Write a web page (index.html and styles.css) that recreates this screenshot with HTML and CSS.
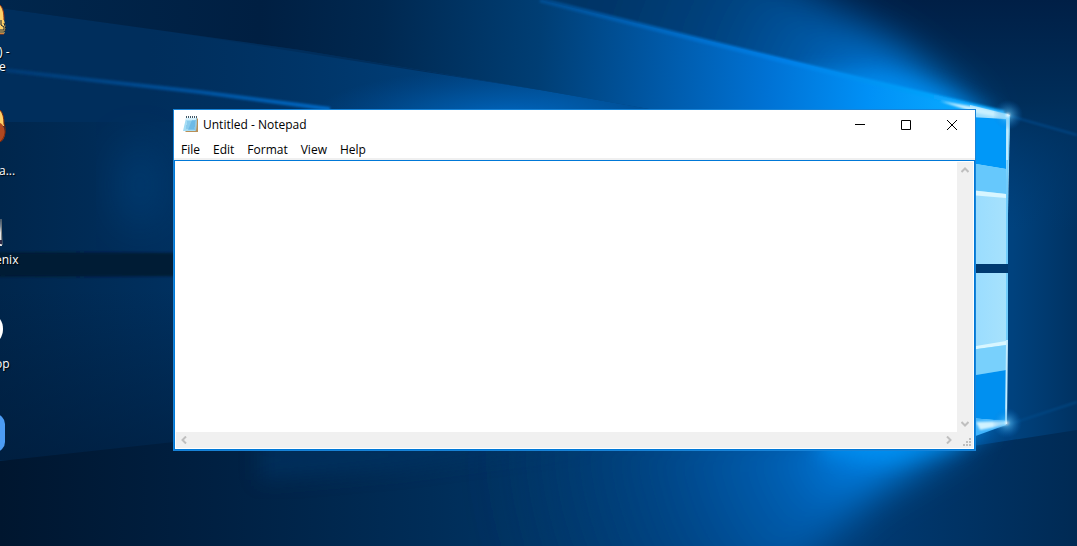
FILE: index.html
```html
<!DOCTYPE html>
<html lang="en">
<head>
  <meta charset="UTF-8">
  <meta name="viewport" content="width=device-width, initial-scale=1.0">
  <link rel="stylesheet" href="styles.css">
  <title>Untitled - Notepad</title>
</head>
<body>

<svg class="wallpaper" viewBox="0 0 1077 546" preserveAspectRatio="none" aria-hidden="true">
  <defs>
    <linearGradient id="base" gradientUnits="userSpaceOnUse" x1="0" y1="0" x2="1077" y2="0">
      <stop offset="0" stop-color="#00264c"/>
      <stop offset="0.16" stop-color="#00305f"/>
      <stop offset="0.5" stop-color="#004584"/>
      <stop offset="0.8" stop-color="#00468a"/>
      <stop offset="0.94" stop-color="#00427e"/>
      <stop offset="1" stop-color="#003262"/>
    </linearGradient>
    <linearGradient id="sky" gradientUnits="userSpaceOnUse" x1="0" y1="0" x2="1000" y2="60">
      <stop offset="0" stop-color="#00264c"/>
      <stop offset="0.26" stop-color="#001f42"/>
      <stop offset="0.38" stop-color="#002850"/>
      <stop offset="0.54" stop-color="#003e74"/>
      <stop offset="0.65" stop-color="#0056a2"/>
      <stop offset="0.77" stop-color="#0072d4"/>
      <stop offset="0.87" stop-color="#0090f6"/>
      <stop offset="0.96" stop-color="#08a8ff"/>
    </linearGradient>
    <linearGradient id="edge" gradientUnits="userSpaceOnUse" x1="530" y1="0" x2="960" y2="0">
      <stop offset="0" stop-color="#0058a8" stop-opacity="0.5"/>
      <stop offset="0.6" stop-color="#0080e8"/>
      <stop offset="1" stop-color="#08a8ff"/>
    </linearGradient>
    <linearGradient id="streak" gradientUnits="userSpaceOnUse" x1="0" y1="0" x2="330" y2="0">
      <stop offset="0" stop-color="#00468a" stop-opacity="0.5"/>
      <stop offset="1" stop-color="#0068c4"/>
    </linearGradient>
    <linearGradient id="haze" gradientUnits="userSpaceOnUse" x1="150" y1="0" x2="560" y2="0">
      <stop offset="0" stop-color="#003a70" stop-opacity="0"/>
      <stop offset="1" stop-color="#004c90"/>
    </linearGradient>
    <linearGradient id="top-right" gradientUnits="userSpaceOnUse" x1="0" y1="0" x2="0" y2="230">
      <stop offset="0" stop-color="#001f46"/>
      <stop offset="0.45" stop-color="#002e5a"/>
      <stop offset="1" stop-color="#003c74" stop-opacity="0"/>
    </linearGradient>
    <linearGradient id="floor" gradientUnits="userSpaceOnUse" x1="0" y1="0" x2="1077" y2="0">
      <stop offset="0" stop-color="#00162f"/>
      <stop offset="0.2" stop-color="#002042"/>
      <stop offset="0.4" stop-color="#002d58"/>
      <stop offset="0.6" stop-color="#003c72"/>
      <stop offset="0.8" stop-color="#003a72"/>
      <stop offset="1" stop-color="#002a54"/>
    </linearGradient>
    <linearGradient id="shade" x1="0" y1="0" x2="0" y2="1">
      <stop offset="0" stop-color="#001a38" stop-opacity="0"/>
      <stop offset="1" stop-color="#001a38" stop-opacity="0.6"/>
    </linearGradient>
    <linearGradient id="pane" x1="0" y1="0" x2="1" y2="0">
      <stop offset="0" stop-color="#98dcff"/>
      <stop offset="1" stop-color="#a8e2fc"/>
    </linearGradient>
    <radialGradient id="glow">
      <stop offset="0" stop-color="#0070d2"/>
      <stop offset="0.5" stop-color="#0060b4" stop-opacity="0.6"/>
      <stop offset="1" stop-color="#0050a0" stop-opacity="0"/>
    </radialGradient>
    <radialGradient id="beam-top" gradientUnits="userSpaceOnUse" cx="920" cy="110" r="340">
      <stop offset="0" stop-color="#0094f8"/>
      <stop offset="0.15" stop-color="#0078d8"/>
      <stop offset="0.35" stop-color="#005aa8"/>
      <stop offset="0.65" stop-color="#00427e"/>
      <stop offset="1" stop-color="#003466"/>
    </radialGradient>
    <radialGradient id="beam-bottom" gradientUnits="userSpaceOnUse" cx="900" cy="430" r="420">
      <stop offset="0" stop-color="#0094f8"/>
      <stop offset="0.12" stop-color="#007ee2"/>
      <stop offset="0.28" stop-color="#0060b4"/>
      <stop offset="0.55" stop-color="#00488a"/>
      <stop offset="1" stop-color="#003466" stop-opacity="0"/>
    </radialGradient>
    <radialGradient id="spark">
      <stop offset="0" stop-color="#ffffff"/>
      <stop offset="0.25" stop-color="#60c8ff" stop-opacity="0.7"/>
      <stop offset="1" stop-color="#0070d0" stop-opacity="0"/>
    </radialGradient>
    <filter id="soft-1" x="-20%" y="-20%" width="140%" height="140%"><feGaussianBlur stdDeviation="1"/></filter>
    <filter id="soft-10" x="-50%" y="-50%" width="200%" height="200%"><feGaussianBlur stdDeviation="10"/></filter>
    <filter id="soft-20" x="-50%" y="-50%" width="200%" height="200%"><feGaussianBlur stdDeviation="20"/></filter>
  </defs>

  <rect width="1077" height="546" fill="url(#base)"/>

  <!-- light coming in from the upper corner of the window -->
  <rect x="530" width="547" height="230" fill="url(#top-right)"/>
  <path d="M500 -60H730L820 0L900 48L970 106L980 130H560Z" fill="url(#beam-top)" filter="url(#soft-20)"/>
  <path d="M800 74L880 74L950 94L1000 116L960 122H800Z" fill="#0090f4" filter="url(#soft-10)" opacity="0.8"/>
  <path d="M0 8L300 50L540 90L725 122H0Z" fill="#002e5c"/>
  <path d="M150 29L540 90L725 122H150Z" fill="url(#haze)"/>
  <ellipse cx="510" cy="118" rx="200" ry="50" fill="url(#glow)" opacity="0.8"/>
  <path d="M0 0H540L1008 114V130H770L540 90L300 50L0 8Z" fill="url(#sky)"/>
  <path d="M540 0L700 40L850 77L1004 113" fill="none" stroke="url(#edge)" stroke-width="5" filter="url(#soft-1)"/>

  <!-- left wall -->
  <path d="M-5 69L100 81L200 92L330 109" fill="none" stroke="url(#streak)" stroke-width="4" filter="url(#soft-1)"/>
  <ellipse cx="140" cy="185" rx="22" ry="44" fill="#004a88" opacity="0.45" filter="url(#soft-20)"/>
  <rect x="0" y="290" width="200" height="170" fill="url(#shade)"/>
  <path d="M-10 252L200 253V276L-10 277Z" fill="#001a36" filter="url(#soft-1)"/>

  <!-- floor -->
  <path d="M0 461L174 442L500 448H960L1077 430V546H0Z" fill="url(#floor)"/>
  <path d="M260 442H600L400 468L260 480Z" fill="#003566" opacity="0.6" filter="url(#soft-10)"/>
  <path d="M980 426L930 458L870 496L780 590H440L500 420Z" fill="url(#beam-bottom)" filter="url(#soft-20)"/>
  <path d="M820 425L1005 423L950 450L890 460L820 454Z" fill="#0096fa" filter="url(#soft-10)" opacity="0.8"/>
  <path d="M1010 424L1077 402" stroke="#005498" stroke-width="2" opacity="0.5" filter="url(#soft-1)"/>
  <path d="M1010 116L1077 135" stroke="#0058a4" stroke-width="2" opacity="0.5" filter="url(#soft-1)"/>

  <!-- glass panes -->
  <path d="M900 262H1008V275H900Z" fill="#003a70"/>
  <path d="M970 105L1010 115L1007 264H970Z" fill="url(#pane)"/>
  <path d="M970 117L1006 119V169L970 163Z" fill="#0098f8"/>
  <path d="M970 163L1006 169V194L970 190Z" fill="#66c8fc"/>
  <path d="M970 190L1006 194V198L970 195Z" fill="#d8f6ff"/>
  <path d="M970 273H1008L1006 424L970 436Z" fill="url(#pane)"/>
  <path d="M970 347L1006 341V345L970 350Z" fill="#d8f6ff"/>
  <path d="M970 350L1006 345V370L970 376Z" fill="#78d0fc"/>
  <path d="M970 376L1006 370V421L970 418Z" fill="#0090f0"/>
  <path d="M970 418L1006 421V425L970 438Z" fill="#40b4fc"/>
  <path d="M980 430L976 422L1006 421V425Z" fill="#d0f2ff" filter="url(#soft-1)"/>
  <path d="M940 101L976 107L1010 115L1007 119L976 113Z" fill="#c8f0ff" filter="url(#soft-1)"/>
  <path d="M1009 116L1007 180V264M1007 273V340" fill="none" stroke="#70ccfc" stroke-width="2"/>
  <path d="M1008 116L1007 160M1007 340L1006 424" stroke="#c0ecff" stroke-width="2"/>
  <circle cx="1008" cy="115" r="15" fill="url(#spark)" opacity="0.7"/>
  <circle cx="1007" cy="423" r="15" fill="url(#spark)" opacity="0.7"/>
</svg>

<main class="desktop">
  <ul class="shortcuts">
    <li>
      <svg class="shortcut-icon" viewBox="0 0 40 40" aria-hidden="true">
        <path d="M0 5C3 8 4 13 4 20L6 28L4 34H0Z" fill="#ffd067"/>
        <path d="M0 5C3 8 4 13 4 20M0 34H4" fill="none" stroke="#a03810"/>
        <path d="M1 20V25L4 27V30H0M4 23L6 29L4 32H0" fill="none" stroke="#0c2038"/>
      </svg>
      <span class="label">) -<br>e</span>
    </li>
    <li>
      <svg class="shortcut-icon" viewBox="0 0 40 40" aria-hidden="true">
        <path d="M0 6C3 9 4 14 4 22H0Z" fill="#ffd067"/>
        <path d="M0 19C3 20 5 25 5 29C5 33 3 37 0 38Z" fill="#b04820"/>
        <path d="M0 6C3 9 4 14 4 20C6 25 6 33 0 38" fill="none" stroke="#802808"/>
      </svg>
      <span class="label"><br>a...</span>
    </li>
    <li>
      <svg class="shortcut-icon" viewBox="0 0 40 40" aria-hidden="true">
        <path d="M0 11L2 38H0Z" fill="#e4e4e4"/>
        <path d="M1 11L2 37" stroke="#8c8c88"/>
        <path d="M0 32H2V36H0Z" fill="#302c48"/>
      </svg>
      <span class="label clipped">enix</span>
    </li>
    <li>
      <svg class="shortcut-icon" viewBox="0 0 40 40" aria-hidden="true">
        <ellipse cx="-9" cy="17" rx="12" ry="15" fill="#fff"/>
      </svg>
      <span class="label clipped">op</span>
    </li>
    <li>
      <svg class="shortcut-icon" viewBox="0 0 40 40" aria-hidden="true">
        <rect x="-34" y="-2" width="39" height="38" rx="10" fill="#4c9cf4"/>
      </svg>
    </li>
  </ul>

  <section class="window">
    <header class="title-bar">
      <svg class="app-icon" viewBox="0 0 16 17" aria-hidden="true">
        <path d="M14 2L15 3V16H3L2 15Z" fill="#b89058"/>
        <path d="M3 2H14L13 15H0Z" fill="#a4dcf4"/>
        <path d="M3 2H14V4H3Z" fill="#d4f0fc"/>
        <path d="M9 4L13 4L12 14L5 14Z" fill="#7cc4ec"/>
        <path d="M4 6H12M4 8H12M3 10H12M3 12H11" stroke="#4ca4dc" stroke-width="0.6"/>
        <path d="M13.500 2L12.500 15" stroke="#98c4d8"/>
        <path d="M3 1H14" stroke="#405868" stroke-width="2" stroke-dasharray="1 1"/>
      </svg>
      <h1>Untitled - Notepad</h1>
      <div class="window-buttons">
        <button type="button" aria-label="Minimize">
          <svg viewBox="0 0 10 10"><path d="M0 4.500H10"/></svg>
        </button>
        <button type="button" aria-label="Maximize">
          <svg viewBox="0 0 10 10"><path d="M0.500 0.500H9.500V9.500H0.500Z"/></svg>
        </button>
        <button type="button" aria-label="Close">
          <svg viewBox="0 0 10 10"><path d="M0 0L10 10M10 0L0 10"/></svg>
        </button>
      </div>
    </header>

    <nav class="menu-bar">
      <button type="button">File</button>
      <button type="button">Edit</button>
      <button type="button">Format</button>
      <button type="button">View</button>
      <button type="button">Help</button>
    </nav>

    <div class="editor">
      <textarea aria-label="Text editor" spellcheck="false"></textarea>
      <div class="scrollbar vertical">
        <button type="button" aria-label="Scroll up"><svg viewBox="0 0 8 8"><path d="M0.500 6L4 2.500L7.500 6"/></svg></button>
        <button type="button" aria-label="Scroll down"><svg viewBox="0 0 8 8"><path d="M0.500 2L4 5.500L7.500 2"/></svg></button>
      </div>
      <div class="scrollbar horizontal">
        <button type="button" aria-label="Scroll left"><svg viewBox="0 0 8 8"><path d="M6 0.500L2.500 4L6 7.500"/></svg></button>
        <button type="button" aria-label="Scroll right"><svg viewBox="0 0 8 8"><path d="M2 0.500L5.500 4L2 7.500"/></svg></button>
      </div>
      <div class="resize-grip">
        <svg viewBox="0 0 8 8" aria-hidden="true">
          <path d="M6 0H8V2H6ZM3 3H5V5H3ZM6 3H8V5H6ZM0 6H2V8H0ZM3 6H5V8H3ZM6 6H8V8H6Z"/>
        </svg>
      </div>
    </div>
  </section>
</main>

</body>
</html>
```
FILE: styles.css
```css
* {
  box-sizing: border-box;
}

body {
  margin: 0;
  height: 100vh;
  overflow: hidden;
  background-color: #002c58;
  font-family: "Open Sans", "Noto Sans", sans-serif;
  font-size: 12px;
}

button {
  padding: 0;
  border: none;
  background: none;
  color: inherit;
  font: inherit;
}

svg {
  display: block;
}

.wallpaper {
  position: absolute;
  width: 100%;
  height: 100%;
}

.desktop {
  position: relative;
  height: 100%;
}

/* shortcuts */
.shortcuts {
  list-style-type: none;
  margin: 0;
  padding: 0;
}

.shortcuts li {
  height: 104px;
}

.shortcut-icon {
  width: 40px;
  height: 40px;
  margin-bottom: 4px;
  overflow: visible;
}

.label {
  display: block;
  line-height: 15px;
  margin-left: -1px;
  color: #fff;
  text-shadow: 1px 1px 1px #000;
}

.label.clipped {
  margin-left: -5px;
}

/* window */
.window {
  position: absolute;
  top: 109px;
  left: 173px;
  right: 101px;
  bottom: 95px;
  display: flex;
  flex-direction: column;
  border: 1px solid #1883d7;
  background-color: #fff;
  color: #000;
}

.title-bar {
  display: flex;
  align-items: center;
  height: 29px;
  padding-left: 9px;
}

.app-icon {
  width: 16px;
  height: 17px;
}

.title-bar h1 {
  flex: 1;
  margin: 0 0 0 4px;
  font-size: 12px;
  font-weight: normal;
}

.window-buttons {
  display: flex;
  height: 100%;
}

.window-buttons button {
  width: 46px;
  display: flex;
  justify-content: center;
  align-items: center;
}

.window-buttons svg {
  width: 10px;
  height: 10px;
  overflow: visible;
  fill: none;
  stroke: #000;
}

.menu-bar {
  display: flex;
  gap: 13px;
  padding-top: 3px;
  padding-left: 7px;
  line-height: 16px;
  border-bottom: 2px solid #f0f0f0;
}

.editor {
  flex: 1;
  display: grid;
  grid-template-columns: 1fr 16px;
  grid-template-rows: 1fr 16px;
  padding: 1px;
  border: 1px solid #0078d7;
}

.editor textarea {
  width: 100%;
  height: 100%;
  padding: 2px;
  border: none;
  outline: none;
  resize: none;
  font: inherit;
}

.scrollbar {
  display: flex;
  justify-content: space-between;
  background-color: #f0f0f0;
}

.scrollbar.vertical {
  flex-direction: column;
}

.scrollbar button {
  width: 16px;
  height: 16px;
  display: flex;
  justify-content: center;
  align-items: center;
}

.scrollbar svg {
  width: 8px;
  height: 8px;
  fill: none;
  stroke: #bfbfbf;
  stroke-width: 2;
}

.resize-grip {
  display: flex;
  justify-content: flex-end;
  align-items: flex-end;
  padding: 2px;
  background-color: #f0f0f0;
}

.resize-grip svg {
  width: 8px;
  height: 8px;
  fill: #bfbfbf;
}
```
